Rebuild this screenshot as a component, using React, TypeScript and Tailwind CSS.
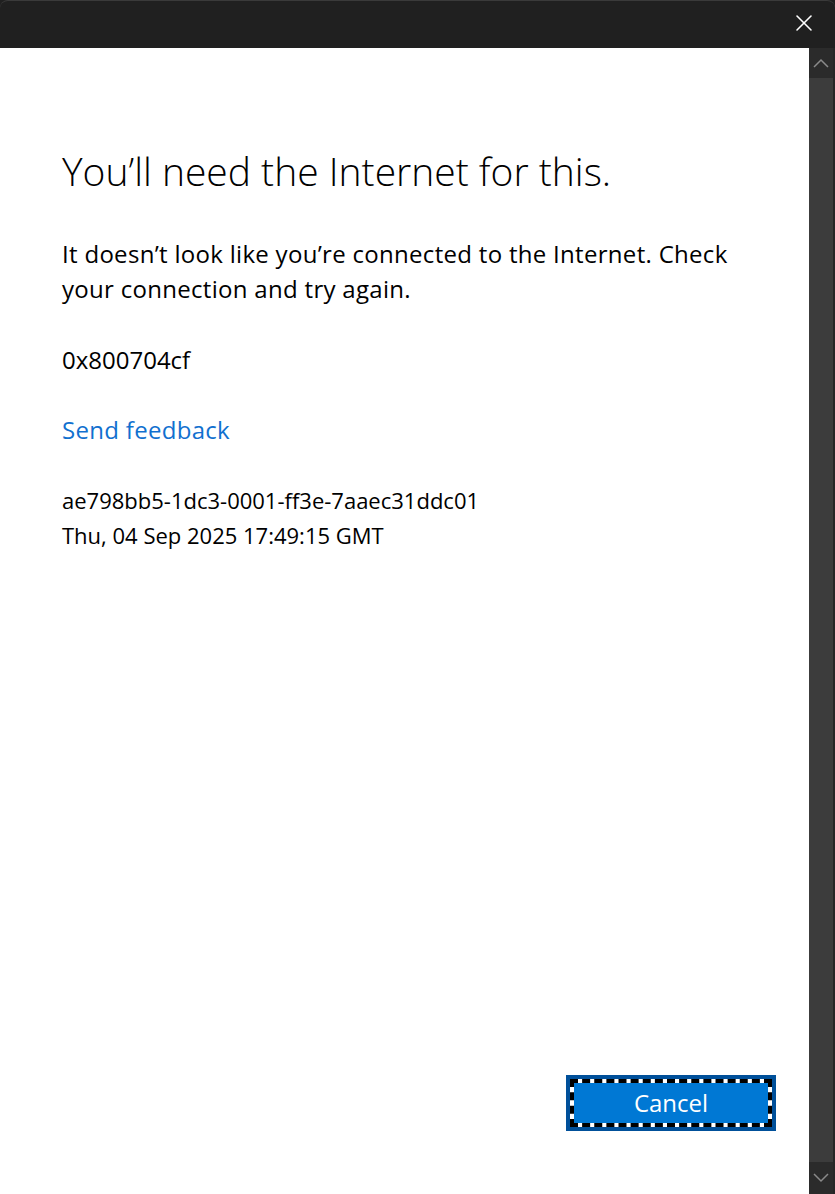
import { X } from 'lucide-react';

const FONT = "font-['Segoe_UI','Open_Sans','Noto_Sans',sans-serif]";

function TitleBar() {
  return (
    <div className="h-12 shrink-0 bg-[#202020] rounded-t-lg border-t border-[#3a3a3a] flex items-center justify-end pr-[17px] pb-[3px]">
      <X className="size-[28px] text-white" strokeWidth={1.3} />
    </div>
  );
}

function ScrollBar() {
  return (
    <div className="w-[26px] shrink-0 bg-[#2b2b2b] flex flex-col border-r-2 border-[#262626]">
      <div className="h-[30px] flex items-center justify-center">
        <svg width="16" height="10" viewBox="0 0 16 10" fill="none" stroke="#8a8a8a" strokeWidth="1.5">
          <path d="M1 9 L8 2 L15 9" />
        </svg>
      </div>
      <div className="flex-1 bg-[#3c3c3c]" />
      <div className="h-[32px] flex items-center justify-center">
        <svg width="16" height="10" viewBox="0 0 16 10" fill="none" stroke="#8a8a8a" strokeWidth="1.5">
          <path d="M1 1 L8 8 L15 1" />
        </svg>
      </div>
    </div>
  );
}

export default function App() {
  return (
    <div className={`h-[1194px] w-[835px] flex flex-col bg-[#202020] overflow-hidden ${FONT}`}>
      <TitleBar />
      <div className="flex-1 flex min-h-0">
        <div className="flex-1 bg-white flex flex-col pl-[62px] pr-8 text-black">
          <h1 className="mt-[99px] text-[39px] leading-[48px] font-light">
            You’ll need the Internet for this.
          </h1>
          <p className="mt-[41px] text-[24px] leading-[35px] tracking-[0.3px] max-w-[700px]">
            It doesn’t look like you’re connected to the Internet. Check your connection and try again.
          </p>
          <p className="mt-[36px] text-[24px] leading-[35px]">0x800704cf</p>
          <a className="mt-[35px] text-[24px] leading-[35px] tracking-[0.3px] text-[#1170cf]">Send feedback</a>
          <div className="mt-[36px] text-[22px] leading-[35px]">
            <div>ae798bb5-1dc3-0001-ff3e-7aaec31ddc01</div>
            <div>Thu, 04 Sep 2025 17:49:15 GMT</div>
          </div>
          <div className="flex-1" />
          <div className="flex justify-end pr-[1px] mb-[63px]">
            <div className="w-[210px] h-[56px] bg-[#00509a] p-1">
              <div className="h-full bg-white border-4 border-dashed border-black">
                <button className="w-full h-full bg-[#0078d4] text-white text-[24px] leading-none">
                  Cancel
                </button>
              </div>
            </div>
          </div>
        </div>
        <ScrollBar />
      </div>
    </div>
  );
}
